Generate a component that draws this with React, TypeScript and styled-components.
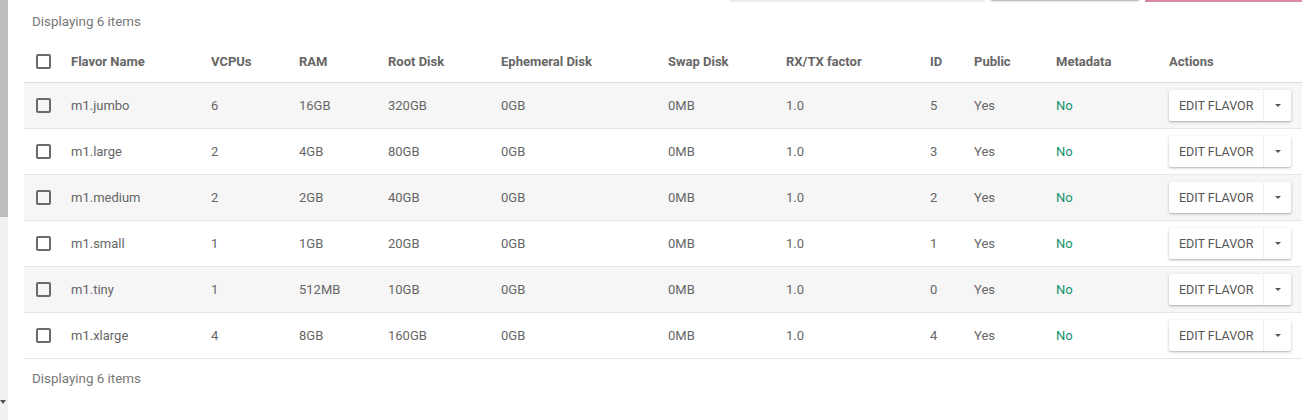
import React from "react";
import styled, { createGlobalStyle } from "styled-components";

const Global = createGlobalStyle`
  html, body { margin: 0; padding: 0; background: #fff; }
  body { font-family: Roboto, "Liberation Sans", Arial, sans-serif; font-size: 13px; color: #666; overflow: hidden; }
`;

const Page = styled.div`
  display: flex;
  width: 1302px;
  height: 420px;
  overflow: hidden;
`;

const ScrollBar = styled.div`
  width: 8px;
  flex: none;
  display: flex;
  flex-direction: column;
  background: #f1f1f1;
  position: relative;
`;

const Thumb = styled.div`
  height: 217px;
  background: #bdbdbd;
`;

const Arrow = styled.div`
  position: absolute;
  left: 0;
  bottom: 16px;
  width: 0;
  height: 0;
  border-left: 3px solid transparent;
  border-right: 3px solid transparent;
  border-top: 4px solid #555;
`;

const Main = styled.div`
  flex: 1;
  padding-left: 16px;
  display: flex;
  flex-direction: column;
  min-width: 0;
`;

const Toolbar = styled.div`
  display: flex;
  justify-content: flex-end;
  gap: 5px;
  height: 30px;
  margin-top: -28px;
`;

const SearchInput = styled.div`
  width: 255px;
  height: 28px;
  border-bottom: 2px solid #ededed;
`;

const ShadowButton = styled.div`
  width: 150px;
  height: 28px;
  border-radius: 3px;
  box-shadow: 0 1px 2px rgba(0, 0, 0, 0.35);
`;

const DangerButton = styled.div`
  width: 160px;
  height: 28px;
  border-bottom: 2px solid #d98aa0;
  margin-right: -3px;
`;

const Summary = styled.div<{ $after?: number }>`
  padding: 12px 8px 0;
  height: 16px;
  line-height: 16px;
  font-size: 13.4px;
  color: #777;
  margin-bottom: ${(p) => p.$after ?? 0}px;
`;

const Table = styled.table`
  border-collapse: collapse;
  width: 1278px;
  table-layout: fixed;
`;

const HeadCell = styled.th<{ $w: number }>`
  width: ${(p) => p.$w}px;
  text-align: left;
  font-weight: 700;
  color: #666;
  height: 41px;
  padding: 0;
  vertical-align: middle;
  border-bottom: 1px solid #dcdcdc;
  white-space: nowrap;
`;

const Row = styled.tr<{ $shaded: boolean }>`
  background: ${(p) => (p.$shaded ? "#f6f6f6" : "#fff")};
  border-bottom: 1px solid #e6e6e6;
`;

const Cell = styled.td<{ $green?: boolean }>`
  height: 45px;
  padding: 0;
  vertical-align: middle;
  color: ${(p) => (p.$green ? "#13936e" : "#666")};
  white-space: nowrap;
`;

const CheckCell = styled.div`
  display: flex;
  justify-content: flex-start;
  padding-left: 12px;
`;

const Box = styled.span`
  display: inline-block;
  width: 11px;
  height: 11px;
  border: 2px solid #6b6b6b;
  border-radius: 2px;
`;

const BtnGroup = styled.div`
  display: inline-flex;
  height: 31px;
  border-radius: 2px;
  background: #fff;
  box-shadow: 0 1px 3px rgba(0, 0, 0, 0.25), 0 1px 1px rgba(0, 0, 0, 0.08);
`;

const EditBtn = styled.div`
  display: flex;
  align-items: center;
  padding: 0 10px;
  font-size: 12.5px;
  color: #555;
  border-right: 1px solid #f0f0f0;
`;

const CaretBtn = styled.div`
  width: 27px;
  display: flex;
  align-items: center;
  justify-content: center;
`;

const Caret = styled.span`
  width: 0;
  height: 0;
  border-left: 3px solid transparent;
  border-right: 3px solid transparent;
  border-top: 3px solid #555;
`;

const cols = [
  { label: "", w: 47 },
  { label: "Flavor Name", w: 140 },
  { label: "VCPUs", w: 88 },
  { label: "RAM", w: 89 },
  { label: "Root Disk", w: 113 },
  { label: "Ephemeral Disk", w: 167 },
  { label: "Swap Disk", w: 118 },
  { label: "RX/TX factor", w: 144 },
  { label: "ID", w: 44 },
  { label: "Public", w: 82 },
  { label: "Metadata", w: 113 },
  { label: "Actions", w: 133 },
];

const rows = [
  ["m1.jumbo", "6", "16GB", "320GB", "0GB", "0MB", "1.0", "5"],
  ["m1.large", "2", "4GB", "80GB", "0GB", "0MB", "1.0", "3"],
  ["m1.medium", "2", "2GB", "40GB", "0GB", "0MB", "1.0", "2"],
  ["m1.small", "1", "1GB", "20GB", "0GB", "0MB", "1.0", "1"],
  ["m1.tiny", "1", "512MB", "10GB", "0GB", "0MB", "1.0", "0"],
  ["m1.xlarge", "4", "8GB", "160GB", "0GB", "0MB", "1.0", "4"],
];

export default function App() {
  return (
    <>
      <Global />
      <Page>
        <ScrollBar>
          <Thumb />
          <Arrow />
        </ScrollBar>
        <Main>
          <Toolbar>
            <SearchInput />
            <ShadowButton />
            <DangerButton />
          </Toolbar>
          <Summary $after={11}>Displaying 6 items</Summary>
          <Table>
            <thead>
              <tr>
                {cols.map((c, i) => (
                  <HeadCell key={i} $w={c.w}>
                    {i === 0 ? (
                      <CheckCell>
                        <Box />
                      </CheckCell>
                    ) : (
                      c.label
                    )}
                  </HeadCell>
                ))}
              </tr>
            </thead>
            <tbody>
              {rows.map((r, i) => (
                <Row key={r[0]} $shaded={i % 2 === 0}>
                  <Cell>
                    <CheckCell>
                      <Box />
                    </CheckCell>
                  </Cell>
                  {r.map((v, j) => (
                    <Cell key={j}>{v}</Cell>
                  ))}
                  <Cell>Yes</Cell>
                  <Cell $green>No</Cell>
                  <Cell>
                    <BtnGroup>
                      <EditBtn>EDIT FLAVOR</EditBtn>
                      <CaretBtn>
                        <Caret />
                      </CaretBtn>
                    </BtnGroup>
                  </Cell>
                </Row>
              ))}
            </tbody>
          </Table>
          <Summary>Displaying 6 items</Summary>
        </Main>
      </Page>
    </>
  );
}
